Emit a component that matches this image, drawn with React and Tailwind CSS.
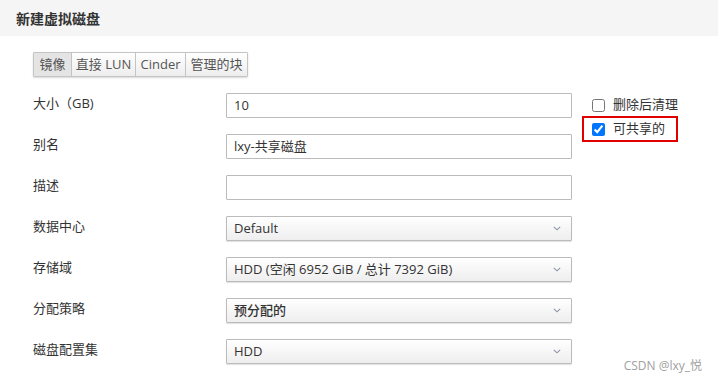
import { useState } from 'react'

const font = { fontFamily: '"Open Sans", "Noto Sans CJK SC", sans-serif' }

function Chevron() {
  return (
    <svg width="8" height="5" viewBox="0 0 8 5" className="text-[#8a93a8]">
      <path d="M0.8 0.8 L4 3.8 L7.2 0.8" fill="none" stroke="currentColor" strokeWidth="1.1" />
    </svg>
  )
}

function TextInput({ value }) {
  return (
    <div className="w-[346px] h-[25px] border border-[#bbb] rounded-[1px] bg-white flex items-center px-[7px] text-[13px] text-[#333]">
      {value}
    </div>
  )
}

function Select({ value, bold }) {
  return (
    <div className="w-[346px] h-[25px] border border-[#bbb] rounded-[1px] bg-gradient-to-b from-white to-[#eee] shadow-[0_1px_1px_rgba(0,0,0,0.12)] flex items-center justify-between pl-[7px] pr-[10px] text-[13px] text-[#333]">
      <span className={bold ? 'font-medium' : ''}>{value}</span>
      <Chevron />
    </div>
  )
}

const rows = [
  { label: '大小（GB)', input: <TextInput value="10" /> },
  { label: '别名', input: <TextInput value="lxy-共享磁盘" /> },
  { label: '描述', input: <TextInput value="" /> },
  { label: '数据中心', input: <Select value="Default" /> },
  { label: '存储域', input: <Select value="HDD (空闲 6952 GiB / 总计 7392 GiB)" /> },
  { label: '分配策略', input: <Select value="预分配的" bold /> },
  { label: '磁盘配置集', input: <Select value="HDD" /> },
]

const tabs = [
  { label: '镜像', w: 'w-[37px]' },
  { label: '直接 LUN', w: 'w-[64px]' },
  { label: 'Cinder', w: 'w-[50px]' },
  { label: '管理的块', w: 'w-[62px]' },
]

export default function App() {
  const [tab, setTab] = useState(0)
  const [wipe, setWipe] = useState(false)
  const [shared, setShared] = useState(true)

  return (
    <div className="relative w-[718px] h-[383px] bg-white overflow-hidden" style={font}>
      {/* Header */}
      <div className="h-9 bg-[#f5f5f5] flex items-center pl-4 text-[14px] font-bold text-[#333]">
        新建虚拟磁盘
      </div>

      <div className="pl-[33px] pt-4">
        {/* Tabs */}
        <div className="flex w-max border border-[#c4c4c4] rounded-[1px] shadow-[0_1px_2px_rgba(0,0,0,0.15)] text-[13px] text-[#555]">
          {tabs.map((t, i) => (
            <button
              key={t.label}
              onClick={() => setTab(i)}
              className={`h-[23px] ${t.w} whitespace-nowrap text-center ${i > 0 ? 'border-l border-[#c4c4c4]' : ''} ${
                tab === i ? 'bg-[#e4e4e4]' : 'bg-gradient-to-b from-white to-[#ededed]'
              }`}
            >
              {t.label}
            </button>
          ))}
        </div>

        <div className="flex mt-4">
          {/* Form */}
          <div className="flex flex-col gap-4">
            {rows.map(r => (
              <div key={r.label} className="flex items-start">
                <div className="w-[193px] pt-[1px] text-[13px] text-[#333] leading-[18px]">{r.label}</div>
                {r.input}
              </div>
            ))}
          </div>

          {/* Checkboxes */}
          <div className="ml-[10px] pt-[1px] flex flex-col text-[13px] text-[#333]">
            <label className="flex items-center h-[22px] pl-[10px] gap-[8px]">
              <input type="checkbox" checked={wipe} onChange={() => setWipe(!wipe)} className="w-[13px] h-[13px] m-0" />
              删除后清理
            </label>
            <label className="flex items-center h-[26px] w-[96px] pl-[10px] gap-[8px] border-2 border-[#e00000]">
              <input type="checkbox" checked={shared} onChange={() => setShared(!shared)} className="w-[13px] h-[13px] m-0 -ml-[2px]" />
              可共享的
            </label>
          </div>
        </div>
      </div>

      {/* Watermark */}
      <div className="absolute right-[16px] bottom-[8px] text-[12px] text-[#a0a0a0]">CSDN @lxy_悦</div>
    </div>
  )
}
